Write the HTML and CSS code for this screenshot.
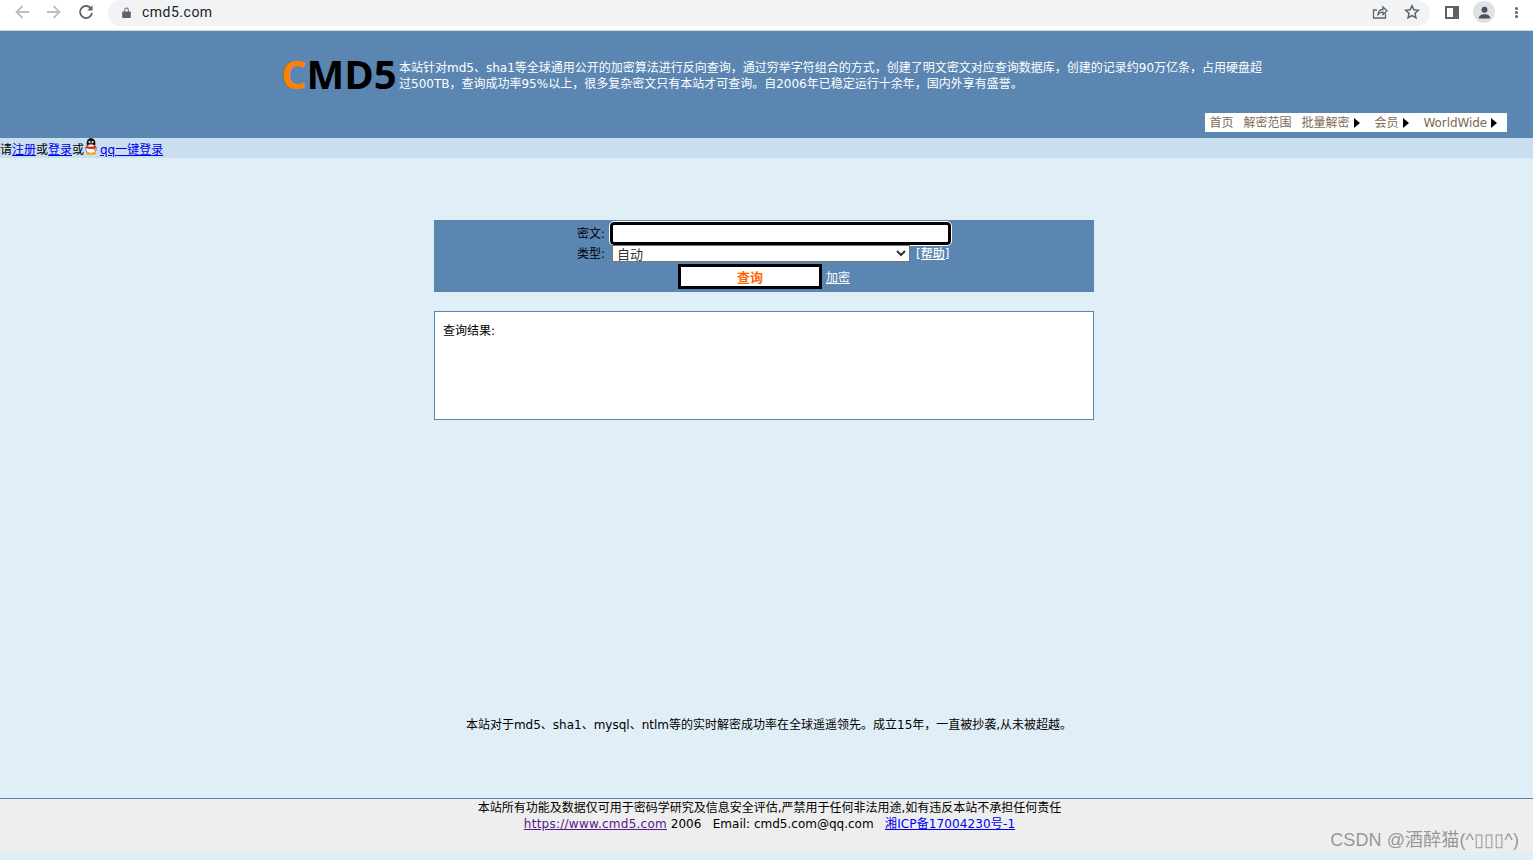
FILE: index.html
```html
<!DOCTYPE html>
<html lang="en">
<head>
  <meta charset="UTF-8">
  <title>cmd5.com</title>
  <link rel="stylesheet" href="styles.css">
</head>
<body>

  <!-- Browser toolbar -->
  <div class="toolbar">
    <svg class="tool-icon nav-icon" viewBox="0 0 16 16"><path d="M15 8H2.5M8.5 2 2.500 8l6 6"/></svg>
    <svg class="tool-icon nav-icon" viewBox="0 0 16 16"><path d="M1 8h12.500M7.500 2l6 6-6 6"/></svg>
    <svg class="tool-icon reload-icon" viewBox="0 0 16 16"><path d="M13.300 5A6 6 0 1 0 14 9"/><path class="solid" d="M14.500 1.200v5.300H9.200z"/></svg>
    <div class="omnibox">
      <svg class="lock-icon" viewBox="0 0 10 12"><path d="M1 5h8a.8.8 0 0 1 .8.8v5.400A.8.8 0 0 1 9 12H1a.8.8 0 0 1-.8-.8V5.800A.8.8 0 0 1 1 5zM2.500 5V3a2.500 2.500 0 0 1 5 0v2H6.500V3a1.500 1.500 0 0 0-3 0v2z"/></svg>
      <span class="url">cmd5.com</span>
      <svg class="omni-icon share-icon" viewBox="0 0 16 16"><path d="M13.500 9.500V14H1.500V6H5"/><path d="M6 10.500C6.300 7.500 8.500 5.500 11 5.500V3l4 3.800-4 3.700V8.200C9 8.200 7.300 9 6 10.500z"/></svg>
      <svg class="omni-icon star-icon" viewBox="0 0 16 16"><path d="M8 1.800l1.900 4 4.400.5-3.300 3 .9 4.400L8 11.500l-3.900 2.200.9-4.400-3.300-3 4.400-.5z"/></svg>
    </div>
    <div class="panel-icon"></div>
    <div class="avatar">
      <svg viewBox="0 0 14 14"><circle cx="7" cy="4" r="3.200"/><path d="M.8 13.500c0-3 3-4.500 6.200-4.500s6.200 1.500 6.200 4.500z"/></svg>
    </div>
    <div class="kebab"><i></i><i></i><i></i></div>
  </div>

  <div class="header">
    <div class="header-top">
      <div class="logo"><span class="logo-c">C</span>MD5</div>
      <p class="intro">本站针对md5、sha1等全球通用公开的加密算法进行反向查询，通过穷举字符组合的方式，创建了明文密文对应查询数据库，创建的记录约90万亿条，占用硬盘超过500TB，查询成功率95%以上，很多复杂密文只有本站才可查询。自2006年已稳定运行十余年，国内外享有盛誉。</p>
    </div>
    <ul class="menu">
      <li>首页</li>
      <li>解密范围</li>
      <li class="has-sub">批量解密</li>
      <li class="has-sub">会员</li>
      <li class="has-sub worldwide">WorldWide</li>
    </ul>
  </div>

  <div class="login-bar">
    请<a href="#">注册</a>或<a href="#">登录</a>或<svg class="qq" viewBox="0 0 12 17">
      <ellipse cx="6" cy="5.500" rx="4.400" ry="5.500" fill="#111"/>
      <ellipse cx="6" cy="11" rx="5.200" ry="4.800" fill="#fff" stroke="#333" stroke-width=".6"/>
      <path d="M1.400 7.800c2.800 1.300 6.400 1.300 9.200 0l.8 2.200c-3.400 1.400-7.400 1.400-10.800 0z" fill="#e0231c"/>
      <path d="M9.300 9.800l1.500 3.200-2.400-1.700z" fill="#e0231c"/>
      <circle cx="4.500" cy="4" r="1" fill="#fff"/><circle cx="7.500" cy="4" r="1" fill="#fff"/>
      <path d="M4.200 5.800h3.600L6 7.200z" fill="#f5a800"/>
      <ellipse cx="3.500" cy="15.500" rx="2.700" ry="1.300" fill="#f5a800"/><ellipse cx="8.500" cy="15.500" rx="2.700" ry="1.300" fill="#f5a800"/>
    </svg> <a href="#">qq一键登录</a>
  </div>

  <div class="main">
    <form class="search">
      <div class="row row-text">
        <label class="field-label">密文:</label>
        <input class="text-input" type="text">
      </div>
      <div class="row row-type">
        <label class="field-label">类型:</label>
        <select class="type-select"><option>自动</option></select>
        <a class="form-link help" href="#">[帮助]</a>
      </div>
      <div class="row row-submit">
        <button class="query" type="button">查询</button>
        <a class="form-link" href="#">加密</a>
      </div>
    </form>

    <div class="result">查询结果:</div>

    <p class="claim">本站对于md5、sha1、mysql、ntlm等的实时解密成功率在全球遥遥领先。成立15年，一直被抄袭,从未被超越。</p>
  </div>

  <div class="footer">
    <div>本站所有功能及数据仅可用于密码学研究及信息安全评估,严禁用于任何非法用途,如有违反本站不承担任何责任</div>
    <div><a class="visited" href="#">https://www.cmd5.com</a> 2006 &nbsp; Email: cmd5.com@qq.com &nbsp; <a class="icp" href="#">湘ICP备17004230号-1</a></div>
  </div>

  <div class="watermark">CSDN @酒醉猫(^▯▯▯^)</div>

</body>
</html>
```

FILE: styles.css
```css
html, body {
  height: 100%;
}

body {
  margin: 0;
  background: #e0eef7;
  font-family: "DejaVu Sans", "Noto Sans CJK SC", sans-serif;
  font-size: 12px;
  color: #000;
  overflow: hidden;
  position: relative;
}

/* browser toolbar */
.toolbar {
  display: flex;
  align-items: center;
  height: 30px;
  border-bottom: 1px solid #d3d5d8;
  background: #fff;
}

.tool-icon {
  width: 16px;
  height: 16px;
  flex: none;
  fill: none;
  stroke-width: 1.800;
  margin: -6px 16px 0 0;
}

.tool-icon:first-child {
  margin-left: 14px;
}

.nav-icon {
  stroke: #bcbec1;
}

.reload-icon {
  stroke: #5f6368;
  margin-right: 14px;
}

.solid {
  fill: #5f6368;
  stroke: none;
}

.omnibox {
  flex: 1;
  display: flex;
  align-items: center;
  height: 26px;
  box-sizing: border-box;
  margin-top: -4px;
  padding: 0 10px 2px 14px;
  background: #f1f3f4;
  border-radius: 13px;
}

.lock-icon {
  width: 9px;
  height: 11px;
  fill: #5f6368;
  margin-right: 12px;
}

.url {
  flex: 1;
  margin-left: -1px;
  font-family: Roboto, sans-serif;
  font-size: 14px;
  color: #202124;
  letter-spacing: .5px;
}

.omni-icon {
  width: 16px;
  height: 16px;
  fill: none;
  stroke: #5f6368;
  stroke-width: 1.300;
}

.share-icon {
  margin-right: 16px;
}

.star-icon {
  stroke-width: 1.500;
}

.panel-icon {
  width: 6px;
  height: 9px;
  margin: -6px 0 0 15px;
  border: 2px solid #5f6368;
  border-right-width: 6px;
  flex: none;
}

.avatar {
  width: 22px;
  height: 22px;
  margin: -6px 0 0 14px;
  border-radius: 50%;
  background: #dfe1e5;
  display: flex;
  align-items: center;
  justify-content: center;
  flex: none;
}

.avatar svg {
  width: 13px;
  height: 13px;
  fill: #4a5260;
}

.kebab {
  display: flex;
  flex-direction: column;
  gap: 1px;
  margin: -6px 15px 0 20px;
  flex: none;
}

.kebab i {
  width: 3px;
  height: 3px;
  border-radius: 50%;
  background: #5f6368;
}

/* header */
.header {
  height: 107px;
  background: #5b86b2;
  box-sizing: border-box;
  padding: 24px 26px 0 281px;
}

.header-top {
  display: flex;
  align-items: center;
}

.logo {
  flex: none;
  font-family: "Open Sans", sans-serif;
  font-size: 40px;
  font-weight: 700;
  line-height: 38px;
  height: 42px;
  width: 118px;
  white-space: nowrap;
}

.logo-c {
  color: #ff8000;
}

.intro {
  width: 868px;
  margin: -1px 0 0;
  color: #fff;
  font-size: 12px;
  line-height: 16px;
}

.menu {
  display: flex;
  width: fit-content;
  height: 19px;
  margin: 16px 0 0 auto;
  padding: 0 10px 0 5px;
  list-style: none;
  background: #fff;
  color: #7c6a55;
  line-height: 20px;
}

.menu li {
  margin-right: 10px;
}

.menu li.has-sub {
  display: flex;
  align-items: center;
  margin-right: 15px;
}

.menu li.worldwide {
  margin-right: 0;
  letter-spacing: -.1px;
}

.menu li.has-sub::after {
  content: "";
  margin-left: 4px;
  border-left: 6px solid #000;
  border-top: 5px solid transparent;
  border-bottom: 5px solid transparent;
}

/* login bar */
.login-bar {
  height: 20px;
  line-height: 19px;
  background: #c9dfef;
  white-space: nowrap;
}

.qq {
  width: 12px;
  height: 17px;
  margin: 0 -1px 0 1px;
  vertical-align: -1px;
}

/* main */
.main {
  height: 640px;
  box-sizing: border-box;
  padding-right: 5px;
  display: flex;
  flex-direction: column;
  align-items: center;
}

.search {
  width: 660px;
  height: 72px;
  margin-top: 62px;
  box-sizing: border-box;
  padding-top: 2px;
  background: #5b86b2;
}

.row {
  display: flex;
  align-items: center;
}

.row-text {
  height: 23px;
}

.row-type {
  height: 17px;
}

.field-label {
  width: 171px;
  margin-top: -2px;
  padding-right: 1px;
  text-align: right;
  flex: none;
}

.text-input {
  width: 341px;
  height: 23px;
  box-sizing: border-box;
  margin: 0 0 0 4px;
  border: 3px solid #000;
  border-radius: 4px;
  outline: 1px solid #fff;
  background: #fff;
}

.type-select {
  width: 298px;
  height: 17px;
  margin: 0 0 0 6px;
  padding: 0;
  border: 1px solid #767676;
  border-radius: 0;
  background: #fff;
  font-family: "Liberation Sans", "Noto Sans CJK SC", sans-serif;
  font-size: 13px;
  color: #333;
}

.form-link {
  color: #fff;
  text-decoration: underline;
}

.help {
  margin: -2px 0 0 6px;
  font-weight: 500;
}

.row-submit {
  margin-top: 2px;
  padding-left: 244px;
}

.query {
  width: 144px;
  height: 25px;
  margin-right: 4px;
  padding: 0;
  border: 3px solid #000;
  background: #fff;
  color: #ff6600;
  font-family: inherit;
  font-size: 13px;
  font-weight: 700;
}

.result {
  width: 660px;
  height: 109px;
  margin-top: 19px;
  box-sizing: border-box;
  padding: 9px 8px;
  border: 1px solid #5b86b2;
  background: #fff;
}

.claim {
  margin: 297px 0 0 10px;
  line-height: 16px;
}

/* footer */
.footer {
  height: 54px;
  box-sizing: border-box;
  padding: 1px 0 0 6px;
  border-top: 1px solid #5b86b2;
  background: #eee;
  text-align: center;
  line-height: 16px;
}

.visited {
  color: #551a8b;
  letter-spacing: .25px;
}

.icp {
  letter-spacing: .12px;
}

.watermark {
  position: absolute;
  right: 14px;
  bottom: 9px;
  font-family: "Liberation Sans", "Noto Sans CJK SC", sans-serif;
  font-size: 18px;
  letter-spacing: .1px;
  color: rgba(90, 90, 90, .6);
}
```
